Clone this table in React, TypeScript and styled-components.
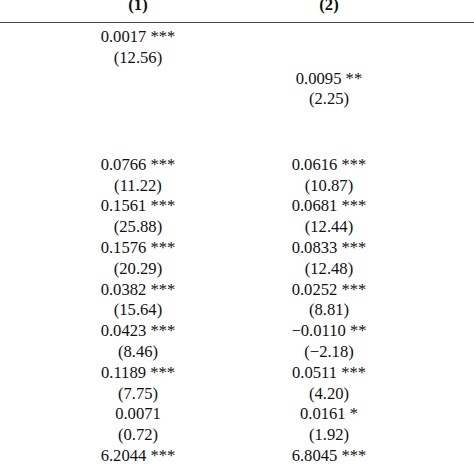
import React from "react";
import styled, { createGlobalStyle } from "styled-components";

const Global = createGlobalStyle`
  html, body { margin: 0; padding: 0; background: #ffffff; }
  body { width: 474px; height: 474px; overflow: hidden; }
`;

const Page = styled.div`
  width: 474px;
  height: 474px;
  overflow: hidden;
  font-family: "Liberation Serif", "Times New Roman", serif;
  font-size: 16.6px;
  color: #111111;
`;

const Row = styled.div<{ $lh?: number }>`
  display: grid;
  grid-template-columns: 42.5px 191px 191px 1fr;
  line-height: ${(p) => p.$lh ?? 20.8}px;
  height: ${(p) => p.$lh ?? 20.8}px;
`;

const Header = styled(Row)`
  margin-top: -6px;
  height: auto;
  padding-bottom: 7px;
  border-bottom: 1px solid #4a4a4a;
  font-weight: bold;
`;

const Body = styled.div`
  padding-top: 4px;
`;

const Cell = styled.div`
  text-align: center;
  white-space: nowrap;
`;

const Spacer = styled.div<{ $h: number }>`
  height: ${(p) => p.$h}px;
`;

type R = [string, string];

const top: R[] = [
  ["0.0017 ***", ""],
  ["(12.56)", ""],
  ["", "0.0095 **"],
  ["", "(2.25)"],
];

const bottom: R[] = [
  ["0.0766 ***", "0.0616 ***"],
  ["(11.22)", "(10.87)"],
  ["0.1561 ***", "0.0681 ***"],
  ["(25.88)", "(12.44)"],
  ["0.1576 ***", "0.0833 ***"],
  ["(20.29)", "(12.48)"],
  ["0.0382 ***", "0.0252 ***"],
  ["(15.64)", "(8.81)"],
  ["0.0423 ***", "\u22120.0110 **"],
  ["(8.46)", "(\u22122.18)"],
  ["0.1189 ***", "0.0511 ***"],
  ["(7.75)", "(4.20)"],
  ["0.0071", "0.0161 *"],
  ["(0.72)", "(1.92)"],
  ["6.2044 ***", "6.8045 ***"],
];

const Rows = ({ data }: { data: R[] }) => (
  <>
    {data.map((r, i) => (
      <Row key={i}>
        <Cell />
        <Cell>{r[0]}</Cell>
        <Cell>{r[1]}</Cell>
        <Cell />
      </Row>
    ))}
  </>
);

export default function App() {
  return (
    <Page>
      <Global />
      <Header $lh={21}>
        <Cell />
        <Cell>(1)</Cell>
        <Cell>(2)</Cell>
        <Cell />
      </Header>
      <Body>
        <Rows data={top} />
        <Spacer $h={44.6} />
        <Rows data={bottom} />
      </Body>
    </Page>
  );
}
